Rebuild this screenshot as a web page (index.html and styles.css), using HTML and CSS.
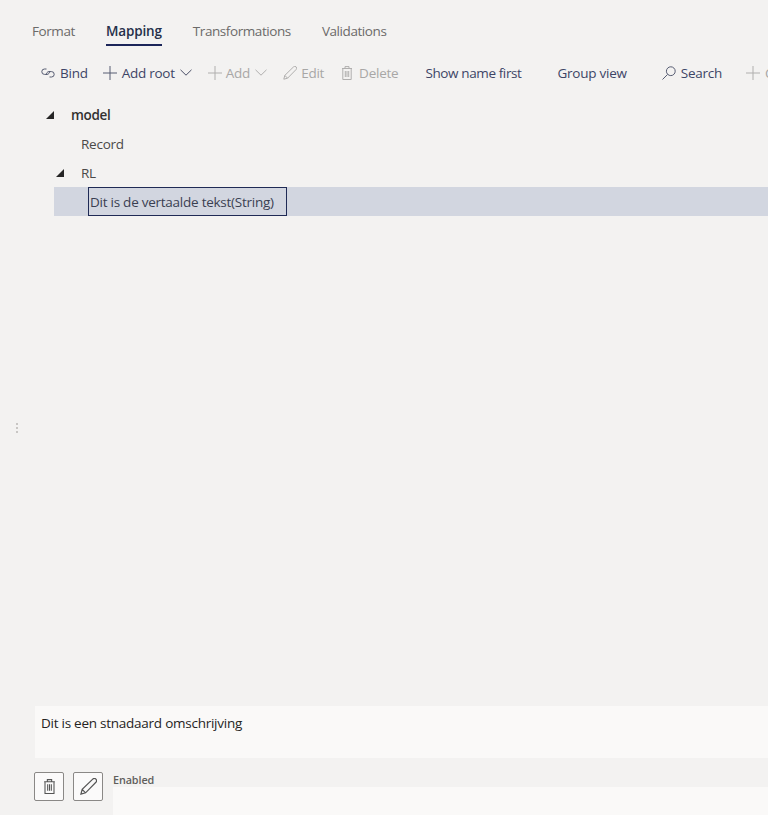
FILE: index.html
```html
<!DOCTYPE html>
<html lang="en">
<head>
<meta charset="utf-8">
<title>Mapping</title>
<link rel="stylesheet" href="styles.css">
</head>
<body>
<div class="page">
  <nav class="tabs">
    <span class="tab">Format</span>
    <span class="tab active">Mapping</span>
    <span class="tab">Transformations</span>
    <span class="tab">Validations</span>
  </nav>
  <div class="toolbar">
    <span class="cmd g-bind"><svg class="ico" viewBox="0 0 14 14"><path d="M5.500 3H3.500a2.700 2.700 0 0 0 0 5.400H6a2.700 2.700 0 0 0 2.500-3.400M8.500 11h2a2.700 2.700 0 0 0 0-5.400H8a2.700 2.700 0 0 0-2.500 3.400"/></svg>Bind</span>
    <span class="cmd g-root"><svg class="ico" viewBox="0 0 14 14"><path d="M7 0v14M0 7h14"/></svg>Add root<svg class="chev" viewBox="0 0 12 7"><path d="M.5.8 6 6.200 11.500.8"/></svg></span>
    <span class="cmd off g-add"><svg class="ico" viewBox="0 0 14 14"><path d="M7 0v14M0 7h14"/></svg>Add<svg class="chev" viewBox="0 0 12 7"><path d="M.5.8 6 6.200 11.500.8"/></svg></span>
    <span class="cmd off g-edit"><svg class="ico" viewBox="0 0 14 14"><path d="M.8 13.200l1-3.800L10.500.9a1.500 1.500 0 0 1 2.600 2.600L4.600 12.200zM1.800 9.400l2.800 2.800"/></svg>Edit</span>
    <span class="cmd off g-del"><svg class="ico" viewBox="0 0 14 14"><path d="M2 2.500h10M5 2.500V.6h4v1.900M2.800 2.500v11h8.400v-11M5.300 5v6M7 5v6M8.700 5v6"/></svg>Delete</span>
    <span class="cmd g-show">Show name first</span>
    <span class="cmd g-group">Group view</span>
    <span class="cmd g-search"><svg class="ico" viewBox="0 0 14 14"><circle cx="8.800" cy="5.200" r="4.400"/><path d="M5.600 8.400.5 13.500"/></svg>Search</span>
    <span class="cmd off"><svg class="ico" viewBox="0 0 14 14"><path d="M7 0v14M0 7h14"/></svg>Calculated</span>
  </div>
  <div class="tree">
    <div class="row model"><i class="tri"></i><span>model</span></div>
    <div class="row record"><span>Record</span></div>
    <div class="row rl"><i class="tri"></i><span>RL</span></div>
    <div class="row selected"><span class="focus">Dit is de vertaalde tekst(String)</span></div>
  </div>
  <div class="description">Dit is een stnadaard omschrijving</div>
  <div class="footer">
    <button class="iconbtn"><svg class="ico dark" viewBox="0 0 14 14"><path d="M2 2.500h10M5 2.500V.6h4v1.900M2.800 2.500v11h8.400v-11M5.300 5v6M7 5v6M8.700 5v6"/></svg></button>
    <button class="iconbtn"><svg class="ico dark big" viewBox="0 0 14 14"><path d="M.8 13.200l1-3.800L10.500.9a1.500 1.500 0 0 1 2.600 2.600L4.600 12.200zM1.800 9.400l2.800 2.800"/></svg></button>
    <div class="field">
      <label class="field-label">Enabled</label>
      <div class="field-input"></div>
    </div>
  </div>
  <div class="grip"><b></b><b></b><b></b></div>
</div>
</body>
</html>
```
FILE: styles.css
```css
* { box-sizing: border-box; }
html, body { margin: 0; height: 100%; overflow: hidden; }
body { background: #f3f2f1; font-family: "Open Sans", "Noto Sans", sans-serif; font-size: 13.500px; letter-spacing: -.25px; color: #323130; }
.page { height: 815px; width: 768px; display: flex; flex-direction: column; position: relative; overflow: hidden; }

.tabs { display: flex; gap: 31px; padding: 21px 0 0 32px; height: 46px; flex: none; letter-spacing: -.42px; }
.tab { color: #6b6a69; height: 25px; line-height: 20px; white-space: nowrap; }
.tab.active { color: #252f4a; font-weight: 600; border-bottom: 2px solid #1b2559; letter-spacing: -.15px; }

.toolbar { display: flex; align-items: center; height: 29px; margin-top: 12px; padding-left: 41px; flex: none; white-space: nowrap; }
.cmd { display: inline-flex; align-items: center; gap: 5px; color: #3d4566; flex: none; }
.cmd.off { color: #a8a7a6; }
.g-bind { margin-right: 15px; }
.g-root { margin-right: 16px; }
.g-add { margin-right: 16px; gap: 4px; }
.g-edit { margin-right: 16px; gap: 4px; }
.g-del { margin-right: 27px; gap: 5px; }
.g-show { margin-right: 36px; letter-spacing: -.38px; }
.g-group { margin-right: 35px; }
.g-search { margin-right: 24px; }

.ico { width: 14px; height: 14px; fill: none; stroke: #565c72; stroke-width: 1; flex: none; }
.off .ico { stroke: #b0afae; }
.chev { width: 12px; height: 7px; fill: none; stroke: #4a4f66; stroke-width: 1; flex: none; }
.off .chev { stroke: #b0afae; margin-left: 1px; }

.tree { padding-top: 13px; flex: none; }
.row { height: 29px; display: flex; align-items: center; white-space: nowrap; }
.tri { width: 0; height: 0; border-left: 8px solid transparent; border-bottom: 8px solid #252525; flex: none; }
.model { padding-left: 46px; font-weight: 600; letter-spacing: -.3px; }
.model .tri { margin-right: 17px; }
.record { padding-left: 81px; color: #4a4948; }
.rl { padding-left: 56px; color: #4a4948; }
.rl .tri { margin-right: 17px; }
.selected { margin-left: 54px; background: #d2d6e0; }
.focus { margin-left: 34px; width: 199px; height: 29px; line-height: 29px; padding-left: 1px; border: 1px solid #1f2a55; color: #3a3f52; }

.description { margin: auto 0 0 35px; height: 52px; background: #faf9f8; padding: 8px 6px; color: #252423; flex: none; }

.footer { display: flex; height: 57px; padding-left: 34px; flex: none; }
.iconbtn { width: 30px; height: 29px; margin: 14px 9px 0 0; padding: 0; background: #fbfafa; border: 1px solid #8a8886; border-radius: 2px; display: flex; align-items: center; justify-content: center; }
.dark { stroke: #555; width: 15px; height: 17px; }
.dark.big { width: 17px; height: 17px; }
.field { flex: 1; margin-left: 1px; padding-top: 15px; display: flex; flex-direction: column; }
.field-label { font-size: 10.800px; font-weight: 600; color: #605e5c; line-height: 14px; letter-spacing: -.1px; }
.field-input { flex: 1; background: #faf9f8; }

.grip { position: absolute; left: 16px; top: 423px; display: flex; flex-direction: column; gap: 2px; }
.grip b { width: 2px; height: 2px; background: #c8c6c4; }
```
